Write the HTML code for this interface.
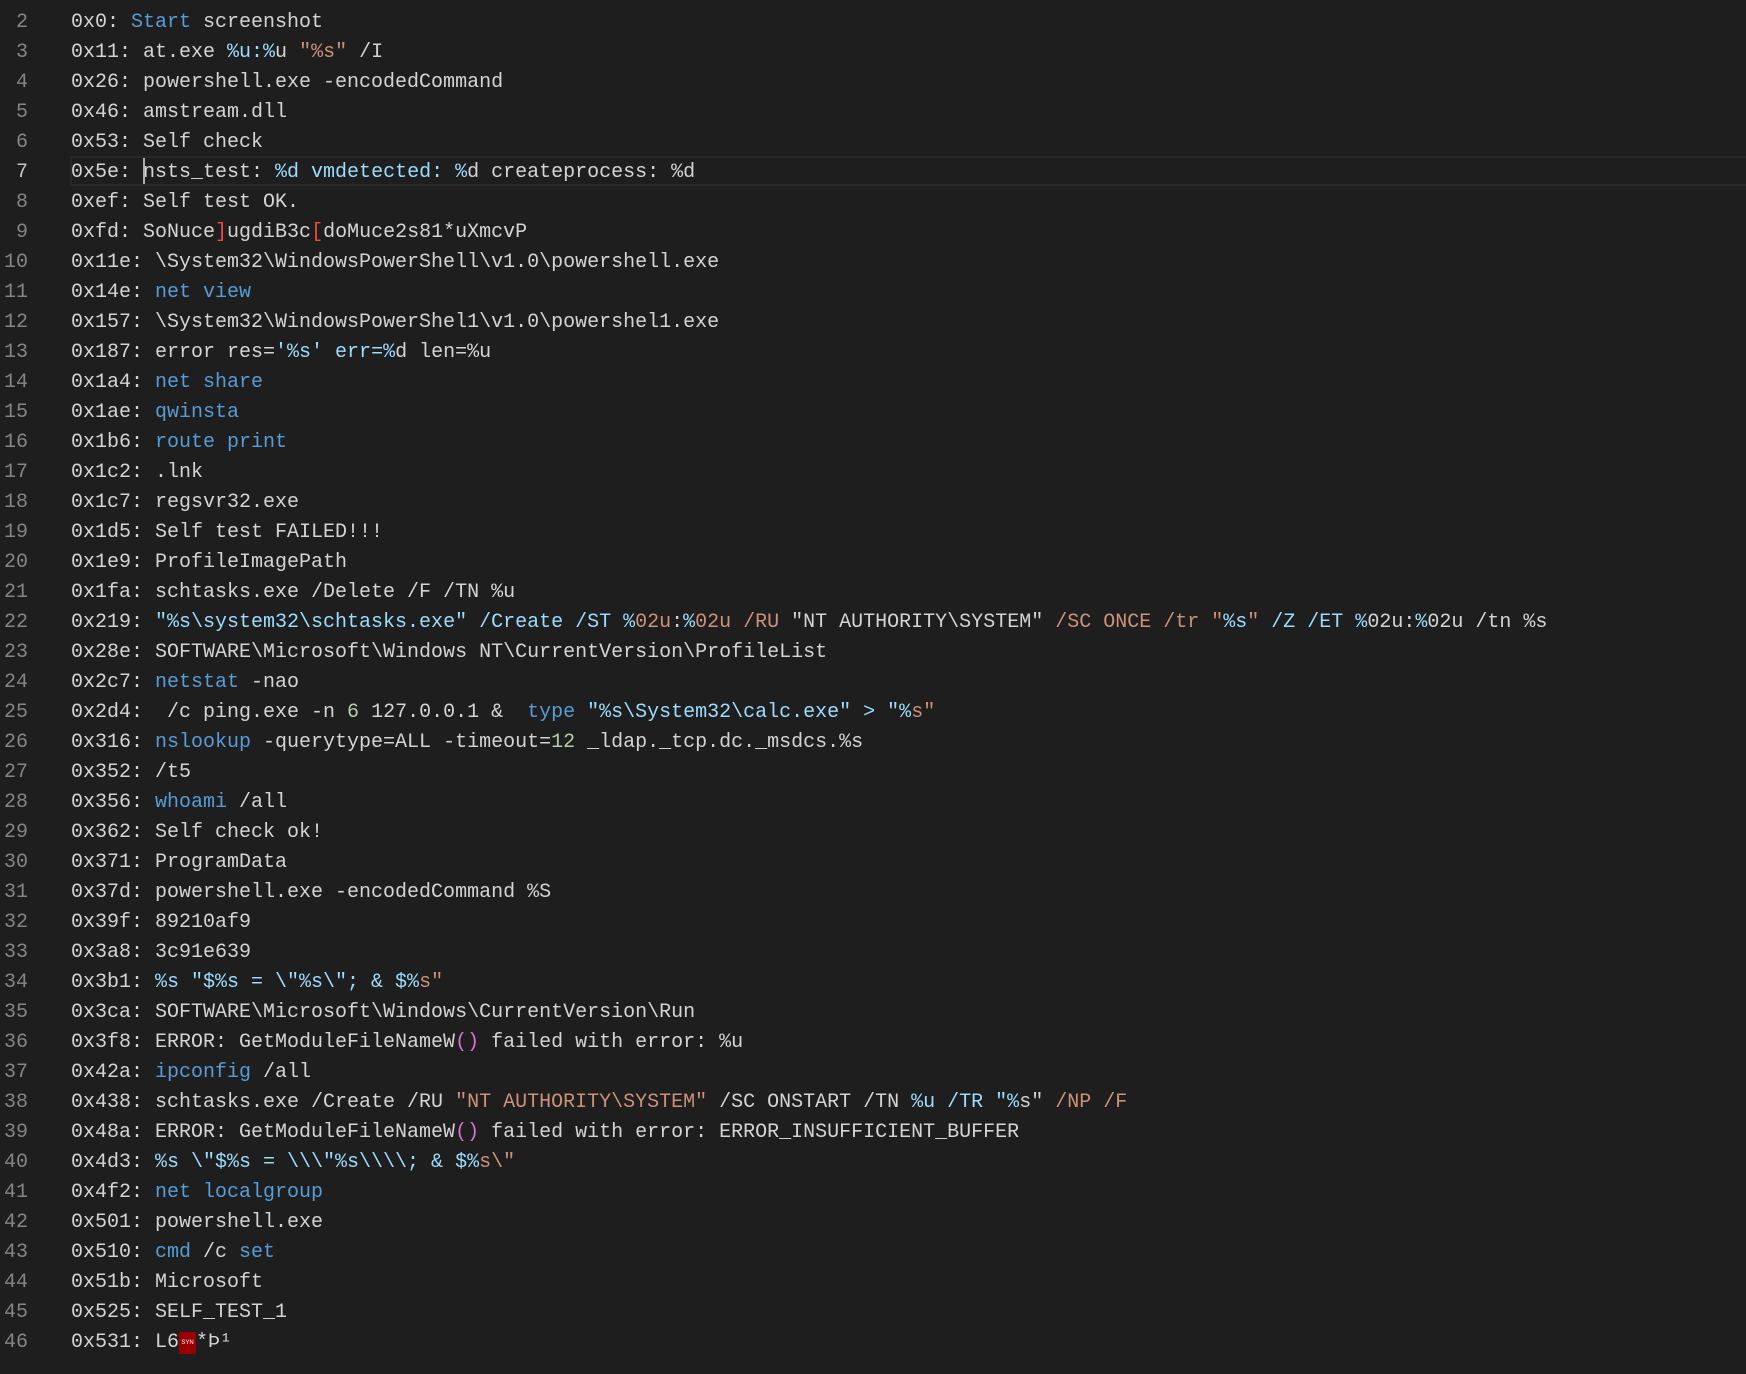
<!DOCTYPE html>
<html><head><meta charset="utf-8"><style>
html,body{margin:0;padding:0;background:#1e1e1e;width:1746px;height:1374px;overflow:hidden}
body{font-family:"Liberation Mono","DejaVu Sans Mono",monospace;font-size:20px;color:#d4d4d4;position:relative}
.l{position:absolute;left:0;height:30px;line-height:30px;white-space:pre;width:1746px;margin-top:3px}
.n{position:absolute;left:0;width:28px;text-align:right;color:#858585}
.t{position:absolute;left:71px}
.k{color:#569cd6}.v{color:#9cdcfe}.s{color:#ce9178}.g{color:#b5cea8}.p{color:#da70d6}.r{color:#f44747}
.cur{position:absolute;left:70px;top:156px;width:1680px;height:26px;border:2px solid #282828}
.caret{position:absolute;left:143px;top:158px;width:2px;height:26px;background:#aeafad}
.syn{display:inline-block;width:17px;height:22px;background:#9b0000;color:#fff;font-size:6px;line-height:22px;text-align:center;vertical-align:top;margin-top:4px;overflow:hidden;font-family:"Liberation Sans",sans-serif}
</style></head><body>
<div class="cur"></div>
<div class="l" style="top:5px"><span class="n">2</span><span class="t">0x0: <span class="k">Start</span> screenshot</span></div>
<div class="l" style="top:35px"><span class="n">3</span><span class="t">0x11: at.exe <span class="v">%u:%</span>u <span class="s">"%s"</span> /I</span></div>
<div class="l" style="top:65px"><span class="n">4</span><span class="t">0x26: powershell.exe -encodedCommand</span></div>
<div class="l" style="top:95px"><span class="n">5</span><span class="t">0x46: amstream.dll</span></div>
<div class="l" style="top:125px"><span class="n">6</span><span class="t">0x53: Self check</span></div>
<div class="l" style="top:155px"><span class="n" style="color:#c6c6c6">7</span><span class="t">0x5e: nsts_test: <span class="v">%d vmdetected: %</span>d createprocess: %d</span></div>
<div class="l" style="top:185px"><span class="n">8</span><span class="t">0xef: Self test OK.</span></div>
<div class="l" style="top:215px"><span class="n">9</span><span class="t">0xfd: SoNuce<span class="r">]</span>ugdiB3c<span class="r">[</span>doMuce2s81*uXmcvP</span></div>
<div class="l" style="top:245px"><span class="n">10</span><span class="t">0x11e: \System32\WindowsPowerShell\v1.0\powershell.exe</span></div>
<div class="l" style="top:275px"><span class="n">11</span><span class="t">0x14e: <span class="k">net view</span></span></div>
<div class="l" style="top:305px"><span class="n">12</span><span class="t">0x157: \System32\WindowsPowerShel1\v1.0\powershel1.exe</span></div>
<div class="l" style="top:335px"><span class="n">13</span><span class="t">0x187: error res=<span class="v">'%s' err=%</span>d len=%u</span></div>
<div class="l" style="top:365px"><span class="n">14</span><span class="t">0x1a4: <span class="k">net share</span></span></div>
<div class="l" style="top:395px"><span class="n">15</span><span class="t">0x1ae: <span class="k">qwinsta</span></span></div>
<div class="l" style="top:425px"><span class="n">16</span><span class="t">0x1b6: <span class="k">route print</span></span></div>
<div class="l" style="top:455px"><span class="n">17</span><span class="t">0x1c2: .lnk</span></div>
<div class="l" style="top:485px"><span class="n">18</span><span class="t">0x1c7: regsvr32.exe</span></div>
<div class="l" style="top:515px"><span class="n">19</span><span class="t">0x1d5: Self test FAILED!!!</span></div>
<div class="l" style="top:545px"><span class="n">20</span><span class="t">0x1e9: ProfileImagePath</span></div>
<div class="l" style="top:575px"><span class="n">21</span><span class="t">0x1fa: schtasks.exe /Delete /F /TN %u</span></div>
<div class="l" style="top:605px"><span class="n">22</span><span class="t">0x219: <span class="v">"%s\system32\schtasks.exe" /Create /ST %</span><span class="s">02u</span>:<span class="v">%</span><span class="s">02u /RU </span>"NT AUTHORITY\SYSTEM"<span class="s"> /SC ONCE /tr </span><span class="s">"</span><span class="v">%s</span><span class="s">"</span><span class="v"> /Z /ET %</span>02u:<span class="v">%</span>02u /tn %s</span></div>
<div class="l" style="top:635px"><span class="n">23</span><span class="t">0x28e: SOFTWARE\Microsoft\Windows NT\CurrentVersion\ProfileList</span></div>
<div class="l" style="top:665px"><span class="n">24</span><span class="t">0x2c7: <span class="k">netstat</span> -nao</span></div>
<div class="l" style="top:695px"><span class="n">25</span><span class="t">0x2d4:  /c ping.exe -n <span class="g">6</span> 127.0.0.1 &amp;  <span class="k">type</span> <span class="v">"%s\System32\calc.exe" &gt; "%</span><span class="s">s"</span></span></div>
<div class="l" style="top:725px"><span class="n">26</span><span class="t">0x316: <span class="k">nslookup</span> -querytype=ALL -timeout=<span class="g">12</span> _ldap._tcp.dc._msdcs.%s</span></div>
<div class="l" style="top:755px"><span class="n">27</span><span class="t">0x352: /t5</span></div>
<div class="l" style="top:785px"><span class="n">28</span><span class="t">0x356: <span class="k">whoami</span> /all</span></div>
<div class="l" style="top:815px"><span class="n">29</span><span class="t">0x362: Self check ok!</span></div>
<div class="l" style="top:845px"><span class="n">30</span><span class="t">0x371: ProgramData</span></div>
<div class="l" style="top:875px"><span class="n">31</span><span class="t">0x37d: powershell.exe -encodedCommand %S</span></div>
<div class="l" style="top:905px"><span class="n">32</span><span class="t">0x39f: 89210af9</span></div>
<div class="l" style="top:935px"><span class="n">33</span><span class="t">0x3a8: 3c91e639</span></div>
<div class="l" style="top:965px"><span class="n">34</span><span class="t">0x3b1: <span class="v">%s "$%s = \"%s\"; &amp; $%</span><span class="s">s"</span></span></div>
<div class="l" style="top:995px"><span class="n">35</span><span class="t">0x3ca: SOFTWARE\Microsoft\Windows\CurrentVersion\Run</span></div>
<div class="l" style="top:1025px"><span class="n">36</span><span class="t">0x3f8: ERROR: GetModuleFileNameW<span class="p">()</span> failed with error: %u</span></div>
<div class="l" style="top:1055px"><span class="n">37</span><span class="t">0x42a: <span class="k">ipconfig</span> /all</span></div>
<div class="l" style="top:1085px"><span class="n">38</span><span class="t">0x438: schtasks.exe /Create /RU <span class="s">"NT AUTHORITY\SYSTEM"</span> /SC ONSTART /TN <span class="v">%u /TR "%</span>s" <span class="s">/NP /F</span></span></div>
<div class="l" style="top:1115px"><span class="n">39</span><span class="t">0x48a: ERROR: GetModuleFileNameW<span class="p">()</span> failed with error: ERROR_INSUFFICIENT_BUFFER</span></div>
<div class="l" style="top:1145px"><span class="n">40</span><span class="t">0x4d3: <span class="v">%s \"$%s = \\\"%s\\\\; &amp; $%</span><span class="s">s\"</span></span></div>
<div class="l" style="top:1175px"><span class="n">41</span><span class="t">0x4f2: <span class="k">net localgroup</span></span></div>
<div class="l" style="top:1205px"><span class="n">42</span><span class="t">0x501: powershell.exe</span></div>
<div class="l" style="top:1235px"><span class="n">43</span><span class="t">0x510: <span class="k">cmd</span> /c <span class="k">set</span></span></div>
<div class="l" style="top:1265px"><span class="n">44</span><span class="t">0x51b: Microsoft</span></div>
<div class="l" style="top:1295px"><span class="n">45</span><span class="t">0x525: SELF_TEST_1</span></div>
<div class="l" style="top:1325px"><span class="n">46</span><span class="t">0x531: L6<span class="syn">SYN</span>*Þ¹</span></div>
<div class="caret"></div>
</body></html>
